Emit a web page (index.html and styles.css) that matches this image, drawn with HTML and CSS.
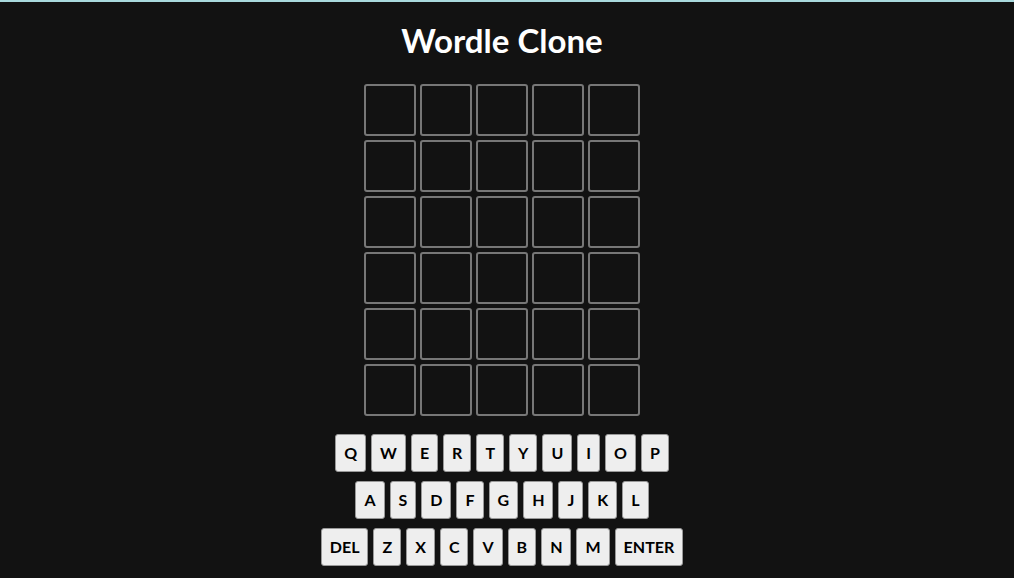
FILE: index.html
```html
<!DOCTYPE html>
<html lang="en">
  <head>
    <meta charset="UTF-8" />
    <meta name="viewport" content="width=device-width, initial-scale=1.0" />
    <title>Wordle Clone</title>
    <link rel="stylesheet" href="styles.css">
  </head>
  <body>
    <div class="app">
      <h1>Wordle Clone</h1>

      <div id="board" class="board"></div>

      <div id="keyboard" class="keyboard"></div>
    </div>

    <script>
      document.addEventListener('DOMContentLoaded', function() {
        // Build the 6x5 guess board
        const board = document.getElementById('board');
        for (let i = 0; i < 30; i++) {
          const tile = document.createElement('div');
          tile.className = 'tile';
          board.appendChild(tile);
        }

        // On-screen keyboard rows
        const rows = [
          ['Q', 'W', 'E', 'R', 'T', 'Y', 'U', 'I', 'O', 'P'],
          ['A', 'S', 'D', 'F', 'G', 'H', 'J', 'K', 'L'],
          ['DEL', 'Z', 'X', 'C', 'V', 'B', 'N', 'M', 'ENTER']
        ];
        const keyboard = document.getElementById('keyboard');
        rows.forEach(function(row) {
          const rowEl = document.createElement('div');
          rowEl.className = 'key-row';
          row.forEach(function(letter) {
            const key = document.createElement('button');
            key.className = 'key';
            key.textContent = letter;
            rowEl.appendChild(key);
          });
          keyboard.appendChild(rowEl);
        });
      });
    </script>
  </body>
</html>
```

FILE: styles.css
```css
body {
  font-family: "Trebuchet MS", Lato, sans-serif;
  margin: 0;
  padding: 0 10px 0 0;
  background-color: #121212;
  border-top: 2px solid #a9d9dd;
  color: white;
}

.app {
  display: flex;
  flex-direction: column;
  align-items: center;
}

h1 {
  margin: 19px 0 25px;
  font-size: 33px;
  line-height: 38px;
}

.board {
  display: grid;
  grid-template-columns: repeat(5, 52px);
  grid-auto-rows: 52px;
  gap: 4px;
}

.tile {
  border: 2px solid #777;
  border-radius: 3px;
}

.keyboard {
  margin-top: 18px;
  display: flex;
  flex-direction: column;
  gap: 9px;
}

.key-row {
  display: flex;
  justify-content: center;
  gap: 5px;
}

.key {
  font-family: inherit;
  font-size: 16px;
  font-weight: bold;
  line-height: 18px;
  padding: 9px 8px;
  background-color: #eeeeee;
  color: black;
  border: 1px solid #999;
  border-radius: 3px;
  cursor: pointer;
}
```
